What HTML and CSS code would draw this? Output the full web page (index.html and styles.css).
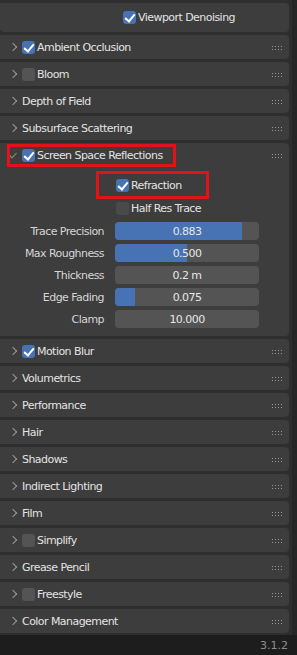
FILE: index.html
```html
<!DOCTYPE html>
<html>
<head>
<meta charset="utf-8">
<link rel="stylesheet" href="styles.css">
</head>
<body>
<div class="app">
  <div class="main">
    <div class="panels">
      <div class="panel top">
        <div class="toprow"><span class="cb on"></span><span class="title">Viewport Denoising</span></div>
      </div>

      <div class="panel"><div class="hdr"><span class="chev"></span><span class="cb on"></span><span class="title">Ambient Occlusion</span><span class="grip"></span></div></div>
      <div class="panel"><div class="hdr"><span class="chev"></span><span class="cb"></span><span class="title">Bloom</span><span class="grip"></span></div></div>
      <div class="panel"><div class="hdr"><span class="chev"></span><span class="title solo">Depth of Field</span><span class="grip"></span></div></div>
      <div class="panel"><div class="hdr"><span class="chev"></span><span class="title solo">Subsurface Scattering</span><span class="grip"></span></div></div>

      <div class="panel open">
        <div class="hdr">
          <span class="chev down"></span><span class="cb on"></span><span class="title">Screen Space Reflections</span><span class="grip"></span>
          <span class="mark mark-ssr"></span>
        </div>
        <div class="body">
          <div class="chkrow"><span class="cb on"></span><span class="lbl">Refraction</span><span class="mark mark-ref"></span></div>
          <div class="chkrow"><span class="cb off2"></span><span class="lbl">Half Res Trace</span></div>
          <div class="sliders">
            <div class="srow"><span class="slabel">Trace Precision</span><span class="slider"><span class="fill" style="width:88.3%"></span><span class="sval">0.883</span></span></div>
            <div class="srow"><span class="slabel">Max Roughness</span><span class="slider"><span class="fill" style="width:50%"></span><span class="sval">0.500</span></span></div>
            <div class="srow"><span class="slabel">Thickness</span><span class="slider"><span class="sval">0.2 m</span></span></div>
            <div class="srow"><span class="slabel">Edge Fading</span><span class="slider"><span class="fill" style="width:14%"></span><span class="sval">0.075</span></span></div>
            <div class="srow"><span class="slabel">Clamp</span><span class="slider"><span class="sval">10.000</span></span></div>
          </div>
        </div>
      </div>

      <div class="panel"><div class="hdr"><span class="chev"></span><span class="cb on"></span><span class="title">Motion Blur</span><span class="grip"></span></div></div>
      <div class="panel"><div class="hdr"><span class="chev"></span><span class="title solo">Volumetrics</span><span class="grip"></span></div></div>
      <div class="panel"><div class="hdr"><span class="chev"></span><span class="title solo">Performance</span><span class="grip"></span></div></div>
      <div class="panel"><div class="hdr"><span class="chev"></span><span class="title solo">Hair</span><span class="grip"></span></div></div>
      <div class="panel"><div class="hdr"><span class="chev"></span><span class="title solo">Shadows</span><span class="grip"></span></div></div>
      <div class="panel"><div class="hdr"><span class="chev"></span><span class="title solo">Indirect Lighting</span><span class="grip"></span></div></div>
      <div class="panel"><div class="hdr"><span class="chev"></span><span class="title solo">Film</span><span class="grip"></span></div></div>
      <div class="panel"><div class="hdr"><span class="chev"></span><span class="cb"></span><span class="title">Simplify</span><span class="grip"></span></div></div>
      <div class="panel"><div class="hdr"><span class="chev"></span><span class="title solo">Grease Pencil</span><span class="grip"></span></div></div>
      <div class="panel"><div class="hdr"><span class="chev"></span><span class="cb"></span><span class="title">Freestyle</span><span class="grip"></span></div></div>
      <div class="panel"><div class="hdr"><span class="chev"></span><span class="title solo">Color Management</span><span class="grip"></span></div></div>
    </div>
  </div>
  <div class="footer"><span class="ver">3.1.2</span></div>
</div>
</body>
</html>
```

FILE: styles.css
```css
* { box-sizing: border-box; }
html, body { margin: 0; padding: 0; }
body {
  background: #1d1d1d;
  font-family: "DejaVu Sans", sans-serif;
  font-size: 11px;
  letter-spacing: -0.55px;
  color: #e0e0e0;
}
.app {
  width: 297px;
  height: 655px;
  display: flex;
  flex-direction: column;
  overflow: hidden;
}
.main {
  flex: 1;
  background: #2e2e2e;
  border-right: 5px solid #262626;
  padding: 3px 3px 2px 0;
}
.panels {
  display: flex;
  flex-direction: column;
  gap: 3px;
}
.panel {
  background: #3d3d3d;
  border-radius: 0 4px 4px 0;
}
.panel.top {
  height: 29px;
  display: flex;
  align-items: center;
  padding-left: 123px;
  border-radius: 0 4px 4px 4px;
}
.toprow { display: flex; align-items: center; }
.hdr {
  position: relative;
  display: flex;
  align-items: center;
  height: 24px;
  padding-left: 11px;
  padding-right: 7px;
}
.chev {
  width: 6px;
  height: 9px;
  margin-right: 5px;
  position: relative;
}
.chev::before {
  content: "";
  position: absolute;
  left: -1px;
  top: 1px;
  width: 5px;
  height: 5px;
  border-right: 1.3px solid #9a9a9a;
  border-bottom: 1.3px solid #9a9a9a;
  transform: rotate(-45deg);
  transform-origin: center;
}
.chev.down::before {
  left: 0;
  top: 0;
  width: 3px;
  height: 6px;
  border-color: #8a8a8a;
  transform: rotate(45deg);
}
.cb {
  width: 13px;
  height: 13px;
  border-radius: 3px;
  background: #545454;
  margin-right: 2px;
  flex: none;
  position: relative;
}
.cb.on { background: #4772b3; }
.cb.on::after {
  content: "";
  position: absolute;
  left: 4px;
  top: 1px;
  width: 4px;
  height: 8px;
  border-right: 2px solid #fff;
  border-bottom: 2px solid #fff;
  transform: rotate(40deg);
}
.cb.off2 { background: #4a4a4a; }
.title {
  color: #e3e3e3;
  white-space: nowrap;
}
.title.solo { margin-left: 0; }
.grip {
  margin-left: auto;
  width: 11px;
  height: 5px;
  background-image: radial-gradient(circle, #9a9a9a 0.6px, transparent 0.9px);
  background-size: 3px 3px;
  background-position: 0 0;
}
.body {
  padding: 7px 0 8px;
}
.chkrow {
  position: relative;
  display: flex;
  align-items: center;
  height: 23px;
  padding-left: 116px;
}
.lbl { color: #e3e3e3; }
.sliders { display: flex; flex-direction: column; gap: 4px; margin-top: 2px; }
.srow {
  display: flex;
  align-items: center;
  height: 18px;
}
.slabel {
  width: 104px;
  text-align: right;
  color: #d6d6d6;
}
.slider {
  position: relative;
  margin-left: 11px;
  width: 144px;
  height: 18px;
  background: #545454;
  border-radius: 4px;
  overflow: hidden;
  display: flex;
  align-items: center;
  justify-content: center;
}
.fill {
  position: absolute;
  left: 0;
  top: 0;
  bottom: 0;
  background: #4772b3;
}
.sval { position: relative; color: #e6e6e6; }
.mark {
  position: absolute;
  border: 3px solid #e3121a;
  pointer-events: none;
}
.mark-ssr { left: 7px; top: 1px; width: 169px; height: 23px; }
.mark-ref { left: 96px; top: -3px; width: 113px; height: 28px; }
.footer {
  height: 22px;
  background: #1d1d1d;
  display: flex;
  align-items: center;
  justify-content: flex-end;
  padding-right: 9px;
}
.ver { color: #8f8f8f; font-size: 11px; letter-spacing: 0; }
```
